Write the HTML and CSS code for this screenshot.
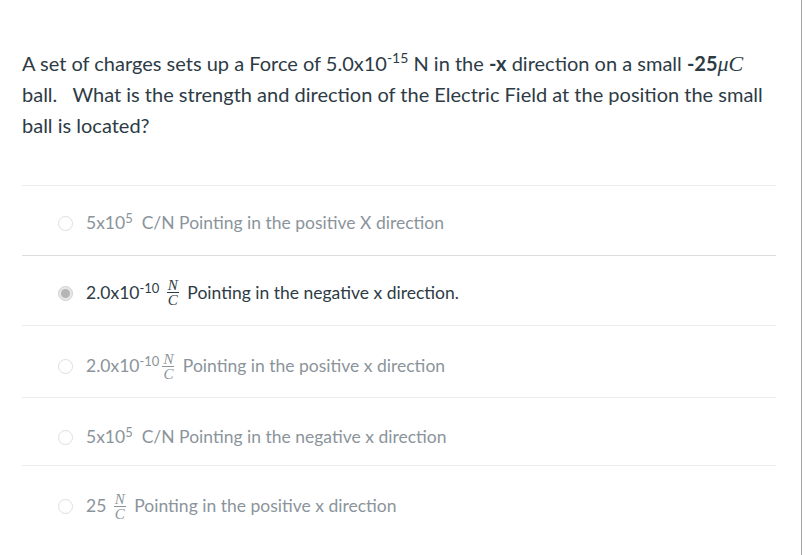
FILE: index.html
```html
<!DOCTYPE html>
<html>
<head>
<meta charset="utf-8">
<link rel="stylesheet" href="styles.css">
</head>
<body>
<div class="page">
  <div class="question">
    A set of charges sets up a Force of 5.0x10<sup class="sup">-15</sup> N in the <b>-x</b> direction on a small <b>-25</b><span class="mi">μC</span> ball.&nbsp;&nbsp; What is the strength and direction of the Electric Field at the position the small ball is located?
  </div>
  <div class="answers">
    <div class="answer">
      <span class="radio"></span>
      <span class="label">5x10<sup class="sup2">5</sup>&nbsp; C/N Pointing in the positive X direction</span>
    </div>
    <div class="answer selected">
      <span class="radio"><span class="dot"></span></span>
      <span class="label">2.0x10<sup class="sup2">-10</sup> <span class="frac"><span class="num">N</span><span class="den">C</span></span> Pointing in the negative x direction.</span>
    </div>
    <div class="answer tall">
      <span class="radio"></span>
      <span class="label">2.0x10<sup class="sup2">-10</sup><span class="frac"><span class="num">N</span><span class="den">C</span></span> Pointing in the positive x direction</span>
    </div>
    <div class="answer short">
      <span class="radio"></span>
      <span class="label">5x10<sup class="sup2">5</sup>&nbsp; C/N Pointing in the negative x direction</span>
    </div>
    <div class="answer last">
      <span class="radio"></span>
      <span class="label">25 <span class="frac"><span class="num">N</span><span class="den">C</span></span> Pointing in the positive x direction</span>
    </div>
  </div>
</div>
</body>
</html>
```
FILE: styles.css
```css
html, body {
  margin: 0;
  padding: 0;
  background: #ffffff;
}
.page {
  width: 802px;
  height: 555px;
  box-sizing: border-box;
  border-right: 1px solid #a3a3a3;
  font-family: Lato, "Open Sans", sans-serif;
  color: #2d3b45;
  padding: 48px 0 0 22px;
}
.question {
  width: 760px;
  font-size: 20px;
  line-height: 31px;
}
.sup {
  font-size: 14px;
  line-height: 0;
  vertical-align: 8px;
}
.mi {
  font-family: "Liberation Serif", "DejaVu Serif", serif;
  font-style: italic;
  font-size: 22px;
}
.answers {
  width: 754px;
  margin-top: 44px;
}
.answer {
  display: flex;
  align-items: center;
  height: 70px;
  border-top: 1px solid #ececec;
  padding-left: 36px;
  padding-top: 5px;
  box-sizing: border-box;
  font-size: 17.5px;
  color: #8b949b;
  gap: 13px;
}
.answer.tall {
  height: 72px;
  padding-top: 10px;
}
.answer.short {
  height: 68px;
  padding-top: 11px;
}
.answer.last {
  padding-top: 12px;
}
.answer.selected {
  border-top-color: #dcdcdc;
  color: #2d3b45;
}
.radio {
  width: 15px;
  height: 15px;
  border-radius: 50%;
  border: 1px solid #dedede;
  box-sizing: border-box;
  display: flex;
  align-items: center;
  justify-content: center;
  background: #fff;
  flex: none;
}
.selected .radio {
  border-color: #d0d0d0;
  background: #e8e8e8;
}
.dot {
  width: 9px;
  height: 9px;
  border-radius: 50%;
  background: #b5b5b5;
}
.label {
  white-space: pre;
  line-height: 26px;
}
.sup2 {
  font-size: 13px;
  line-height: 0;
  vertical-align: 6px;
}
.frac {
  display: inline-flex;
  flex-direction: column;
  align-items: center;
  vertical-align: middle;
  font-family: "Liberation Serif", "DejaVu Serif", serif;
  font-style: italic;
  font-size: 15px;
  line-height: 12px;
  margin: -4px 4px 0 3px;
}
.num {
  border-bottom: 1px solid currentColor;
  padding: 0 1px 1px;
}
.den {
  padding-top: 1px;
}
```
